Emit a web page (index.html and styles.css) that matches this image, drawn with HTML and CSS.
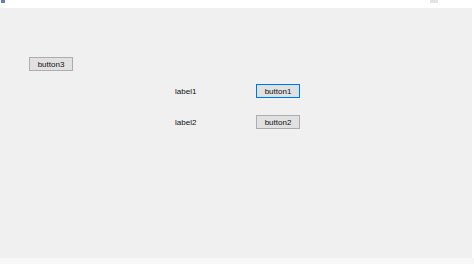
FILE: index.html
```html
<!DOCTYPE html>
<html lang="en">
<head>
  <meta charset="UTF-8" />
  <title>Form1</title>
  <link rel="stylesheet" href="styles.css">
</head>
<body>

<div class="titlebar">
  <span class="app-icon"></span>
  <span class="ctrl"></span>
</div>

<div class="form">
  <div class="row-top">
    <button class="btn">button3</button>
  </div>
  <div class="grid">
    <span class="label">label1</span>
    <button class="btn focused">button1</button>
    <span class="label">label2</span>
    <button class="btn">button2</button>
  </div>
</div>

<div class="bottom"></div>

</body>
</html>
```

FILE: styles.css
```css
body {
  margin: 0;
  width: 474px;
  height: 264px;
  overflow: hidden;
  background: #ffffff;
  font-family: "Liberation Sans", Arial, sans-serif;
  font-size: 8px;
  color: #111;
}

.titlebar {
  height: 8px;
  background: #fff;
  display: flex;
  justify-content: space-between;
  align-items: flex-start;
}

.app-icon {
  width: 4px;
  height: 3px;
  background: #5d7fbf;
  margin-left: 1px;
}

.ctrl {
  width: 8px;
  height: 3px;
  background: #e4e4e4;
  margin-right: 36px;
}

.form {
  height: 250px;
  margin: 0 2px 0 0;
  background: #f0f0f0;
}

.row-top {
  padding: 49px 0 0 29px;
}

.btn {
  width: 44px;
  height: 14px;
  padding: 0;
  font-family: inherit;
  font-size: 8px;
  color: #111;
  background: #e1e1e1;
  border: 1px solid #adadad;
  box-sizing: border-box;
  display: block;
}

.btn.focused {
  border: 1px solid #0078d7;
  box-shadow: inset 0 0 0 1px #cde3f5;
}

.grid {
  display: grid;
  grid-template-columns: 81px 44px;
  row-gap: 17px;
  margin: 13px 0 0 175px;
  align-items: center;
}

.label {
  font-size: 8px;
  color: #111;
}

.bottom {
  height: 6px;
  background: #f7f7f7;
}
```
